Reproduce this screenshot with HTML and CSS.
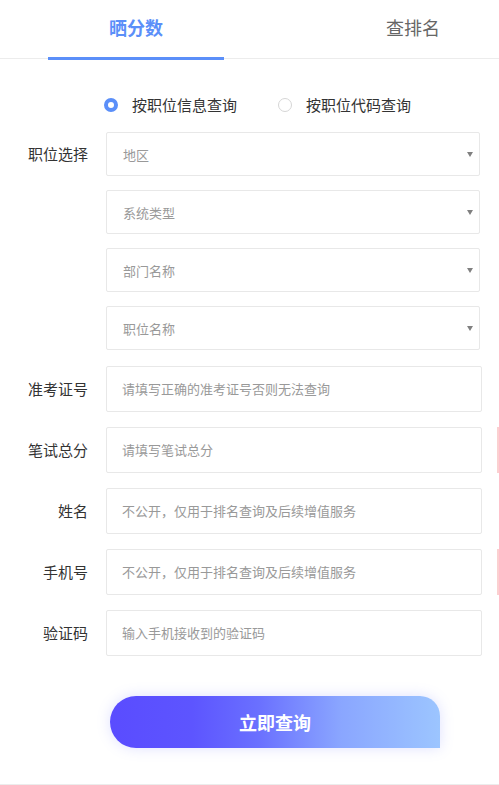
FILE: index.html
```html
<!DOCTYPE html>
<html lang="zh">
<head>
<meta charset="utf-8">
<link rel="stylesheet" href="styles.css">
</head>
<body>
<div class="page">
  <div class="tabs">
    <div class="tab tab-active">晒分数</div>
    <div class="tab tab-other">查排名</div>
  </div>

  <div class="radios">
    <label class="radio"><span class="dot dot-on"></span><span>按职位信息查询</span></label>
    <label class="radio"><span class="dot"></span><span>按职位代码查询</span></label>
  </div>

  <div class="form">
    <div class="row">
      <div class="label">职位选择</div>
      <div class="selects">
        <div class="select"><span>地区</span><i class="arrow"></i></div>
        <div class="select"><span>系统类型</span><i class="arrow"></i></div>
        <div class="select"><span>部门名称</span><i class="arrow"></i></div>
        <div class="select"><span>职位名称</span><i class="arrow"></i></div>
      </div>
    </div>
    <div class="inputs">
      <div class="row row-input">
        <div class="label">准考证号</div>
        <div class="input">请填写正确的准考证号否则无法查询</div>
      </div>
      <div class="row row-input">
        <div class="label">笔试总分</div>
        <div class="input">请填写笔试总分<span class="tip"></span></div>
      </div>
      <div class="row row-input">
        <div class="label">姓名</div>
        <div class="input">不公开，仅用于排名查询及后续增值服务</div>
      </div>
      <div class="row row-input">
        <div class="label">手机号</div>
        <div class="input">不公开，仅用于排名查询及后续增值服务<span class="tip"></span></div>
      </div>
      <div class="row row-input">
        <div class="label">验证码</div>
        <div class="input">输入手机接收到的验证码</div>
      </div>
    </div>
  </div>

  <div class="btn-wrap">
    <button class="btn">立即查询</button>
  </div>
  <div class="bottom-line"></div>
</div>
</body>
</html>
```

FILE: styles.css
```css
html, body {
  margin: 0;
  padding: 0;
  overflow: hidden;
  background: #fff;
}
body {
  font-family: "Noto Sans CJK SC", "Noto Sans", sans-serif;
  color: #333;
}
.page {
  width: 499px;
  height: 785px;
  position: relative;
}
.tabs {
  display: flex;
  height: 58px;
  border-bottom: 1px solid #ececec;
}
.tab {
  box-sizing: border-box;
  height: 60px;
  line-height: 54px;
  font-size: 18px;
  text-align: center;
}
.tab-active {
  margin-left: 48px;
  width: 176px;
  color: #5b8ff9;
  font-weight: bold;
  border-bottom: 3px solid #5b8ff9;
}
.tab-other {
  margin-left: 129px;
  width: 120px;
  color: #666;
}
.radios {
  display: flex;
  margin-top: 36px;
  padding-left: 104px;
  height: 20px;
  align-items: center;
  font-size: 15px;
  line-height: 20px;
}
.radio {
  display: flex;
  align-items: center;
}
.radio + .radio {
  margin-left: 41px;
}
.dot {
  box-sizing: border-box;
  width: 14px;
  height: 14px;
  border-radius: 50%;
  border: 1px solid #d6d6d6;
  margin-right: 14px;
  background: #fff;
}
.dot-on {
  border: 4.5px solid #5b8ff9;
  background: #fff;
}
.form {
  margin-top: 17px;
}
.row {
  display: flex;
}
.label {
  width: 88px;
  margin-right: 18px;
  text-align: right;
  font-size: 15px;
  color: #333;
  flex-shrink: 0;
}
.selects {
  display: flex;
  flex-direction: column;
  gap: 14px;
}
.row .label {
  line-height: 44px;
}
.select {
  box-sizing: border-box;
  width: 374px;
  height: 44px;
  border: 1px solid #e8e8e8;
  border-radius: 2px;
  display: flex;
  align-items: center;
  justify-content: space-between;
  padding: 0 6px 0 16px;
  font-size: 13px;
  color: #999;
}
.arrow {
  width: 0;
  height: 0;
  border-left: 3px solid transparent;
  border-right: 3px solid transparent;
  border-top: 5px solid #808080;
}
.inputs {
  margin-top: 16px;
  display: flex;
  flex-direction: column;
  gap: 15px;
}
.row-input .label {
  line-height: 46px;
}
.input {
  position: relative;
  box-sizing: border-box;
  width: 376px;
  height: 46px;
  border: 1px solid #e8e8e8;
  border-radius: 2px;
  padding-left: 15px;
  font-size: 13px;
  line-height: 44px;
  color: #999;
}
.tip {
  position: absolute;
  left: 390px;
  top: -1px;
  width: 2px;
  height: 46px;
  background: #fbd0d0;
}
.btn-wrap {
  margin-top: 40px;
  padding-left: 110px;
}
.btn {
  display: block;
  width: 330px;
  height: 52px;
  border: none;
  border-radius: 26px 20px 0 26px;
  background: linear-gradient(90deg, #5a4cff 0%, #5d55ff 25%, #6a70ff 45%, #8aa6ff 70%, #9cc5ff 100%);
  box-shadow: 0 0 14px rgba(110, 120, 255, 0.22);
  color: #fff;
  font-family: "Noto Sans CJK SC", sans-serif;
  font-size: 18px;
  font-weight: bold;
  letter-spacing: 0;
  padding: 0;
}
.bottom-line {
  position: absolute;
  left: 0;
  right: 0;
  top: 784px;
  height: 1px;
  background: #ececec;
}
```
